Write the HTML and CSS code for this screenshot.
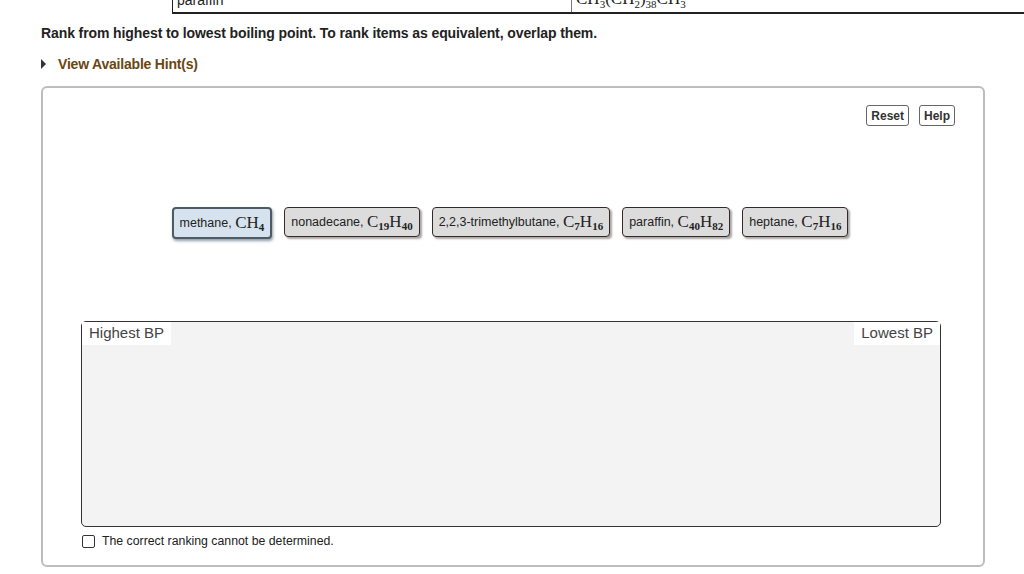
FILE: index.html
```html
<!DOCTYPE html>
<html>
<head>
<meta charset="utf-8">
<link rel="stylesheet" href="styles.css">
</head>
<body>
<table class="data">
  <tr>
    <td class="c1">paraffin</td>
    <td class="c2">CH<sub>3</sub>(CH<sub>2</sub>)<sub>38</sub>CH<sub>3</sub></td>
  </tr>
</table>
<p class="instr">Rank from highest to lowest boiling point. To rank items as equivalent, overlap them.</p>
<div class="hint"><span class="tri"></span>View Available Hint(s)</div>
<div class="panel">
  <div class="tools">
    <button class="btn">Reset</button>
    <button class="btn">Help</button>
  </div>
  <div class="items">
    <div class="item sel">methane, <span class="f">CH<sub>4</sub></span></div>
    <div class="item">nonadecane, <span class="f">C<sub>19</sub>H<sub>40</sub></span></div>
    <div class="item">2,2,3-trimethylbutane, <span class="f">C<sub>7</sub>H<sub>16</sub></span></div>
    <div class="item">paraffin, <span class="f">C<sub>40</sub>H<sub>82</sub></span></div>
    <div class="item">heptane, <span class="f">C<sub>7</sub>H<sub>16</sub></span></div>
  </div>
  <div class="rank">
    <div class="labels">
      <span class="lab">Highest BP</span>
      <span class="lab">Lowest BP</span>
    </div>
  </div>
  <label class="chk"><span class="box"></span>The correct ranking cannot be determined.</label>
</div>
</body>
</html>
```
FILE: styles.css
```css
html, body {
  margin: 0;
  padding: 0;
  background: #fff;
  font-family: "Liberation Sans", Arial, sans-serif;
  color: #222;
  overflow: hidden;
}
.data {
  border-collapse: collapse;
  margin: -12px 0 0 172px;
  width: 900px;
  border-bottom: 2px solid #222;
  border-left: 1px solid #222;
}
.data td {
  height: 24px;
  padding: 0 0 0 4px;
  vertical-align: middle;
}
.c1 {
  width: 394px;
  font-size: 14px;
  border-right: 1px solid #777;
}
.c2 {
  font-family: "Liberation Serif", "Times New Roman", serif;
  font-size: 17px;
}
.c2 sub { font-size: 11px; }
.instr {
  margin: 11px 0 0 41px;
  font-size: 14px;
  font-weight: bold;
  color: #222;
  letter-spacing: -0.1px;
}
.hint {
  margin: 15px 0 0 41px;
  font-size: 14px;
  font-weight: bold;
  color: #6a4613;
  display: flex;
  align-items: center;
  height: 16px;
  letter-spacing: -0.2px;
}
.tri {
  width: 0;
  height: 0;
  border-left: 5px solid #333;
  border-top: 5px solid transparent;
  border-bottom: 5px solid transparent;
  margin-right: 12px;
}
.panel {
  margin: 14px 0 0 41px;
  width: 940px;
  height: 477px;
  border: 2px solid #bdbdbd;
  border-radius: 6px;
  box-sizing: content-box;
  display: flex;
  flex-direction: column;
}
.tools {
  display: flex;
  justify-content: flex-end;
  gap: 10px;
  padding: 17px 28px 0 0;
}
.btn {
  font-family: "Liberation Sans", Arial, sans-serif;
  font-size: 12px;
  font-weight: bold;
  color: #333;
  background: #fff;
  border: 1px solid #666;
  border-radius: 3px;
  height: 21px;
  padding: 0 4px;
}
.items {
  display: flex;
  justify-content: center;
  gap: 12px;
  margin-top: 81px;
  padding-right: 6px;
}
.item {
  font-size: 12.5px;
  color: #222;
  background: #dcdcdc;
  border: 1px solid #3a2828;
  border-radius: 4px;
  box-shadow: 2px 2px 2px rgba(0,0,0,0.35);
  height: 28px;
  padding: 0 6px;
  display: flex;
  align-items: center;
  white-space: pre;
}
.item.sel {
  background: #d6e2ee;
  border: 2px solid #4e5a66;
  box-shadow: 1px 2px 3px rgba(40,60,80,0.5);
}
.f {
  font-family: "Liberation Serif", "Times New Roman", serif;
  font-size: 17px;
}
.f sub {
  font-size: 11px;
  font-weight: bold;
  vertical-align: -3px;
}
.rank {
  margin: 82px 0 0 38px;
  width: 858px;
  height: 204px;
  border: 1px solid #333;
  border-radius: 5px;
  background: #f3f3f3;
}
.labels {
  display: flex;
  justify-content: space-between;
}
.lab {
  background: #fff;
  font-size: 15px;
  color: #444;
  padding: 2px 7px 4px 7px;
}
.chk {
  display: flex;
  align-items: center;
  margin: 7px 0 0 39px;
  font-size: 12.3px;
  color: #222;
}
.box {
  width: 11px;
  height: 11px;
  border: 1px solid #333;
  border-radius: 2px;
  margin-right: 7px;
  background: #fff;
}
```
